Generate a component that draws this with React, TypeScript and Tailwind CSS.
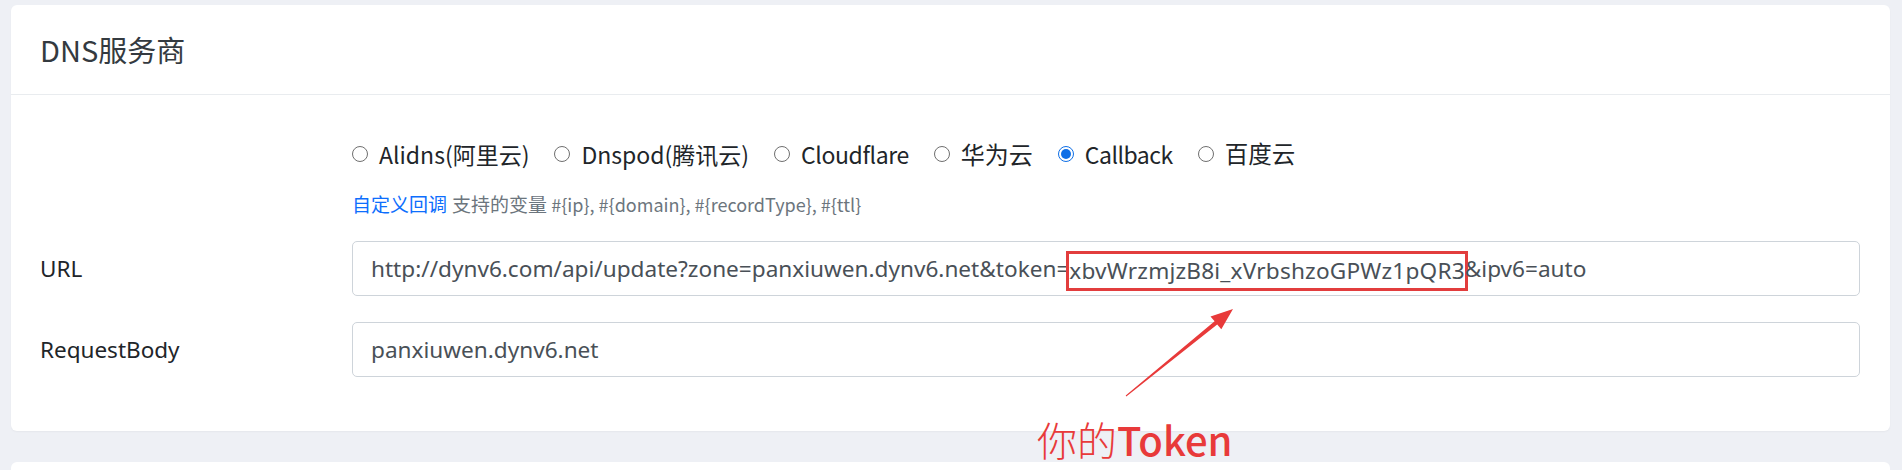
const cjk = { fontFamily: '"Noto Sans CJK SC", "Noto Sans", sans-serif' };
const latin = { fontFamily: '"Noto Sans", "Noto Sans CJK SC", sans-serif' };

const providers = [
  { name: "Alidns(阿里云)", checked: false, cls: "text-[23px]" },
  { name: "Dnspod(腾讯云)", checked: false, cls: "text-[23px]" },
  { name: "Cloudflare", checked: false, cls: "text-[23px] tracking-[-0.4px]" },
  { name: "华为云", checked: false, cls: "text-[24px]" },
  { name: "Callback", checked: true, cls: "text-[23px] tracking-[-0.5px]" },
  { name: "百度云", checked: false, cls: "text-[23.5px]" },
];

function Radio({ checked }: { checked: boolean }) {
  if (checked) {
    return (
      <span className="flex h-4 w-4 items-center justify-center rounded-full border border-[#0f6fe6] bg-white">
        <span className="h-[10px] w-[10px] rounded-full bg-[#0f6fe6]" />
      </span>
    );
  }
  return <span className="h-4 w-4 rounded-full border border-[#6f6f6f] bg-white" />;
}

function Row({ label, children }: { label: string; children: React.ReactNode }) {
  return (
    <div className="flex items-center">
      <div className="w-[312px] text-[22.5px] text-[#212529]" style={latin}>
        {label}
      </div>
      <div
        className="flex h-[55px] flex-1 items-center rounded-[5px] border border-[#ced4da] pl-[18px] text-[22.6px] text-[#495057] whitespace-nowrap"
        style={latin}
      >
        {children}
      </div>
    </div>
  );
}

export default function App() {
  return (
    <div className="relative h-[470px] w-full overflow-hidden bg-[#eef0f5] pt-[5px] pl-[11px] pr-[12px]">
      <div className="rounded-[6px] bg-white shadow-[0_1px_2px_rgba(0,0,0,0.04)]">
        <div className="flex h-[90px] items-center border-b border-[#e9ecef] px-[29px]">
          <h5 className="text-[29px] text-[#343a40]" style={cjk}>
            DNS服务商
          </h5>
        </div>
        <div className="px-[30px] pb-[54px] pt-[44px] pl-[29px]">
          <div className="ml-[312px] flex h-[30px] items-center gap-[25px]" style={cjk}>
            {providers.map((p) => (
              <label key={p.name} className={`flex items-center gap-[11px] text-[#212529] ${p.cls}`}>
                <Radio checked={p.checked} />
                <span>{p.name}</span>
              </label>
            ))}
          </div>
          <div className="ml-[312px] mt-[21px] flex h-[28px] items-center text-[19px]" style={cjk}>
            <span className="text-[#0d6efd]">自定义回调</span>
            <span className="ml-[5px] text-[#6c757d]">
              支持的变量{" "}
              <span className="text-[18px]">#&#123;ip&#125;, #&#123;domain&#125;, #&#123;recordType&#125;, #&#123;ttl&#125;</span>
            </span>
          </div>
          <div className="mt-[23px]">
            <Row label="URL">
              <span>http://dynv6.com/api/update?zone=panxiuwen.dynv6.net&amp;token=</span>
              <span className="mt-[4px] flex h-[34px] items-center tracking-[0.2px] outline-[3px] outline-solid outline-[#e23d3d]">
                xbvWrzmjzB8i_xVrbshzoGPWz1pQR3
              </span>
              <span>&amp;ipv6=auto</span>
            </Row>
          </div>
          <div className="mt-[26px]">
            <Row label="RequestBody">panxiuwen.dynv6.net</Row>
          </div>
        </div>
      </div>
      <div className="mt-[31px] h-[40px] rounded-t-[6px] bg-white" />

      {/* annotation arrow */}
      <svg className="absolute left-[1110px] top-[295px]" width="140" height="115" viewBox="0 0 140 115">
        <polygon
          points="15.7,100.6 104.6,26.3 100.5,21.5 123,14 111.3,34.3 107.2,29.5 16.3,101.4"
          fill="#e83a3a"
        />
      </svg>
      <div className="absolute left-[1037px] top-[419px] flex items-baseline leading-none text-[#e83a3a]">
        <span className="text-[40px] font-light" style={cjk}>
          你的
        </span>
        <span className="text-[40px] font-medium" style={cjk}>
          Token
        </span>
      </div>
    </div>
  );
}
